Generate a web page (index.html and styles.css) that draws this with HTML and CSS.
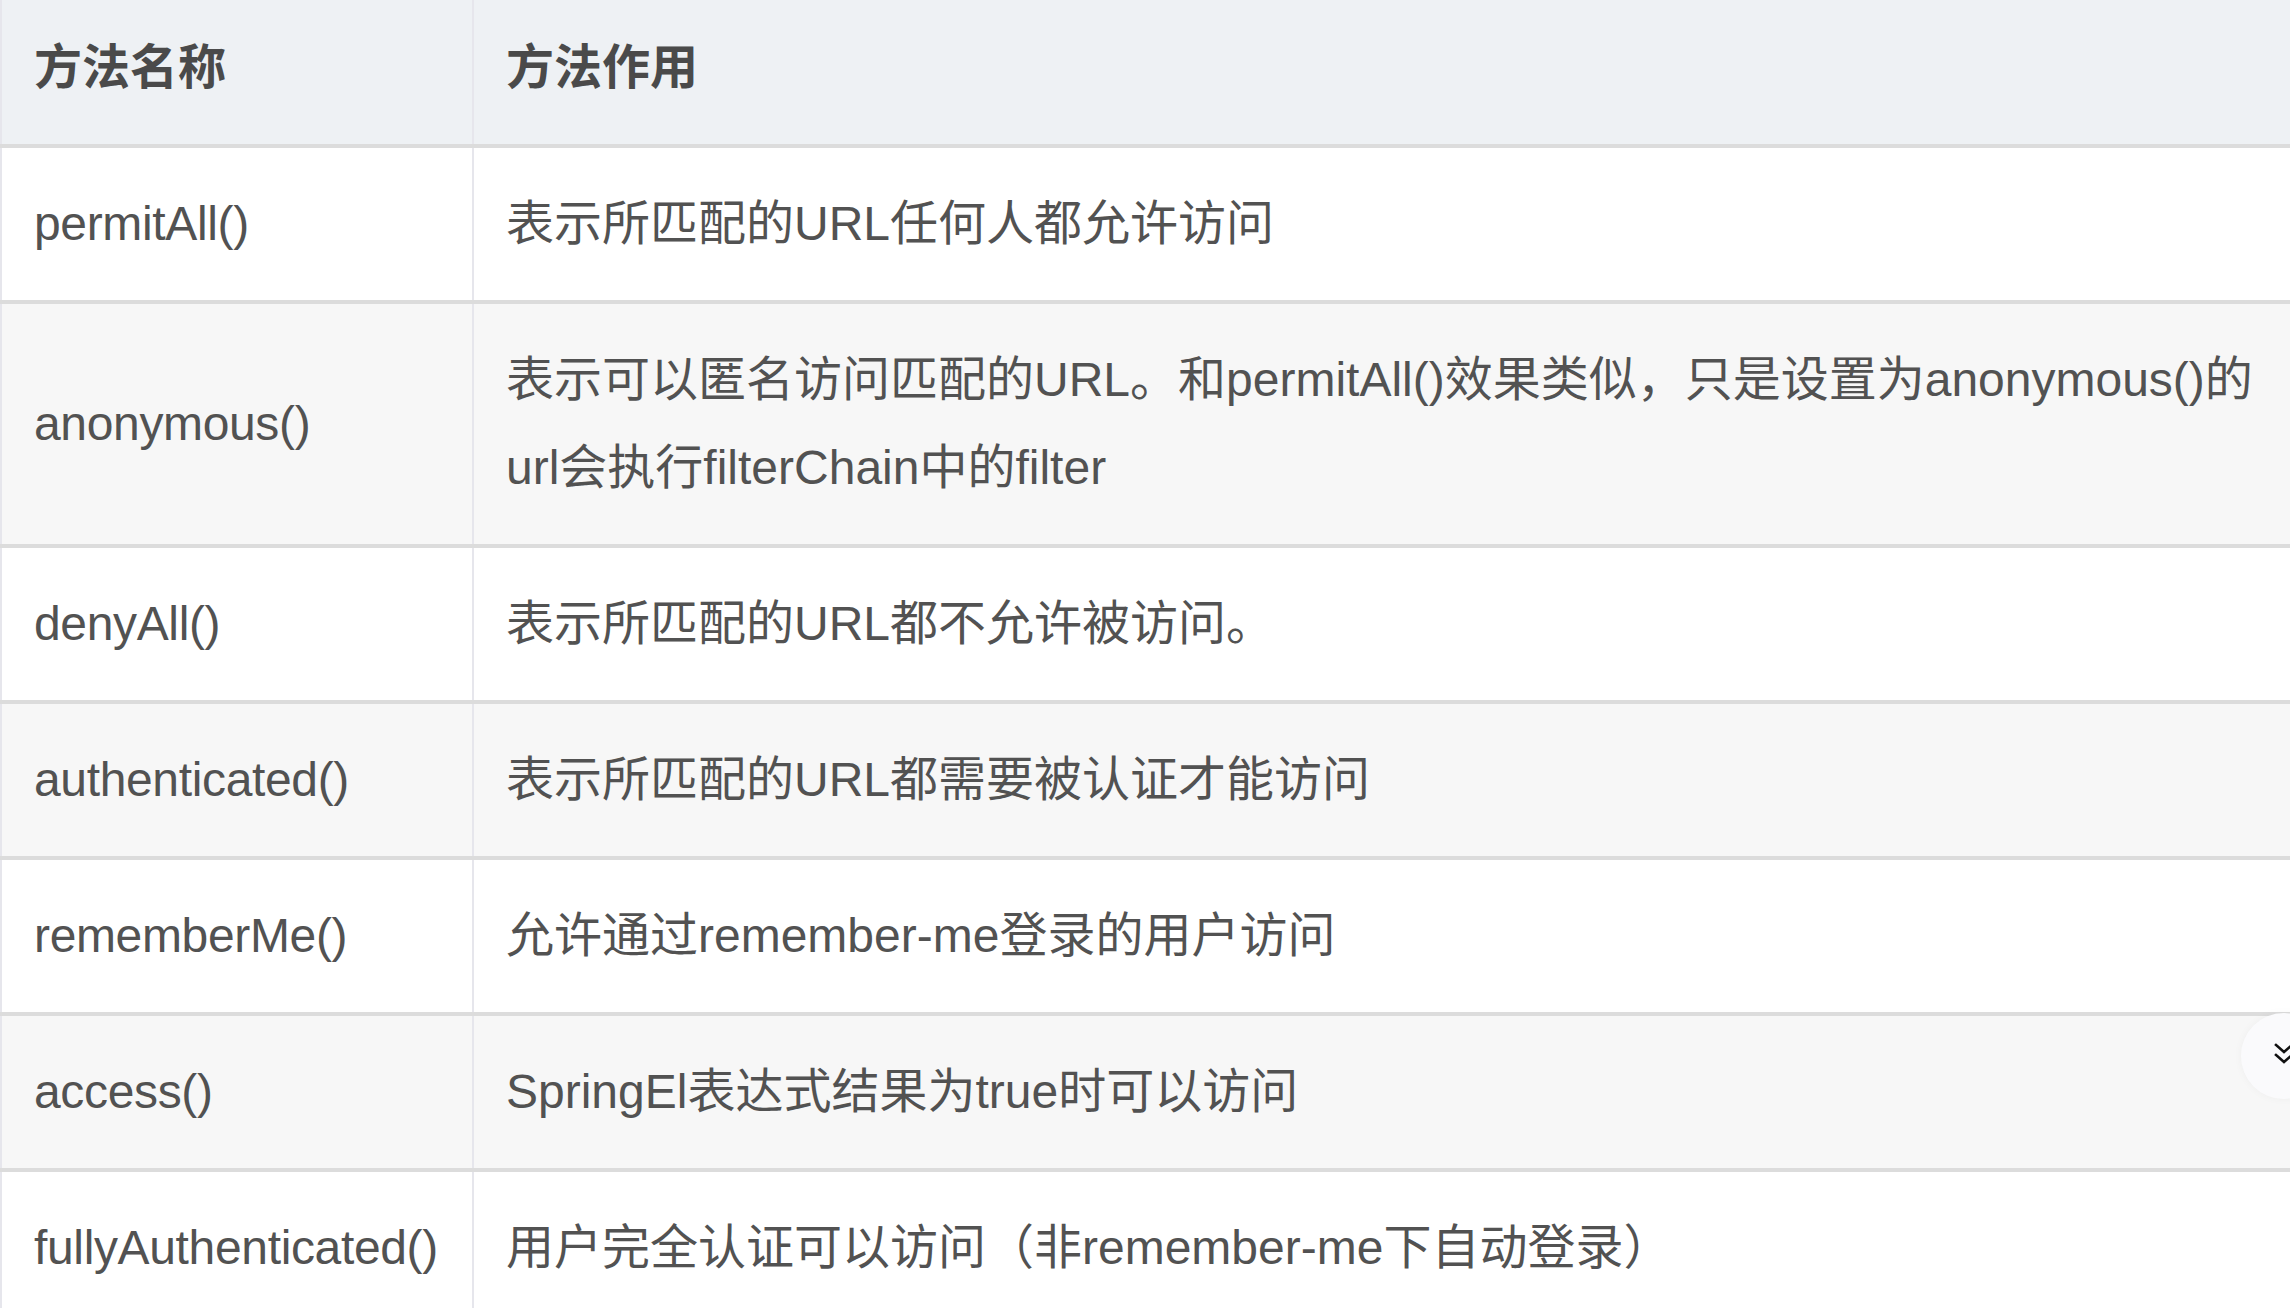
FILE: index.html
```html
<!DOCTYPE html>
<html lang="zh-CN">
<head>
<meta charset="utf-8">
<title>方法</title>
<link rel="stylesheet" href="styles.css">
</head>
<body>
<div class="page">
  <table class="methods">
    <colgroup>
      <col class="col-name">
      <col class="col-desc">
    </colgroup>
    <thead>
      <tr>
        <th>方法名称</th>
        <th>方法作用</th>
      </tr>
    </thead>
    <tbody>
      <tr>
        <td class="name">permitAll()</td>
        <td>表示所匹配的URL任何人都允许访问</td>
      </tr>
      <tr>
        <td class="name">anonymous()</td>
        <td>表示可以匿名访问匹配的URL。和permitAll()效果类似，只是设置为anonymous()的<br>url会执行filterChain中的filter</td>
      </tr>
      <tr>
        <td class="name">denyAll()</td>
        <td>表示所匹配的URL都不允许被访问。</td>
      </tr>
      <tr>
        <td class="name">authenticated()</td>
        <td>表示所匹配的URL都需要被认证才能访问</td>
      </tr>
      <tr>
        <td class="name">rememberMe()</td>
        <td>允许通过remember-me登录的用户访问</td>
      </tr>
      <tr>
        <td class="name">access()</td>
        <td>SpringEl表达式结果为true时可以访问</td>
      </tr>
      <tr>
        <td class="name">fullyAuthenticated()</td>
        <td>用户完全认证可以访问（非remember-me下自动登录）</td>
      </tr>
    </tbody>
  </table>
</div>
<button class="scroll-btn" type="button" aria-label="scroll down">
  <svg width="22" height="24" viewBox="0 0 22 24" fill="none" stroke="#111" stroke-width="2.6" stroke-linecap="square" stroke-linejoin="miter">
    <polyline points="3,3 11,10 19,3"/>
    <polyline points="3,13 11,20 19,13"/>
  </svg>
</button>
</body>
</html>
```
FILE: styles.css
```css
html, body {
  margin: 0;
  padding: 0;
  background: #ffffff;
  overflow: hidden;
}

.page {
  width: 2300px;
  margin-top: -8px;
}

.methods {
  width: 2300px;
  border-collapse: collapse;
  table-layout: fixed;
  font-family: "Liberation Sans", "Noto Sans CJK SC", sans-serif;
  font-size: 48px;
  line-height: 88px;
  color: #525252;
}

.col-name {
  width: 472px;
}

.methods th,
.methods td {
  padding: 32px 32px;
  text-align: left;
  vertical-align: middle;
  border-left: 2px solid #e6e6ec;
  border-bottom: 4px solid #dcdcdc;
  white-space: nowrap;
}

.methods td.name {
  letter-spacing: -0.35px;
}

.methods th {
  background: #eef1f4;
  font-weight: bold;
  color: #4a4a4a;
}

.methods tbody tr:nth-child(odd) {
  background: #ffffff;
}

.methods tbody tr:nth-child(even) {
  background: #f7f7f7;
}

.scroll-btn {
  position: fixed;
  left: 2241px;
  top: 1013px;
  width: 86px;
  height: 86px;
  border-radius: 50%;
  border: none;
  padding: 0;
  background: #fafafc;
  box-shadow: 0 0 8px rgba(0, 0, 0, 0.04);
  display: flex;
  align-items: center;
  justify-content: center;
}

.scroll-btn svg {
  display: block;
  margin-top: -4px;
}
```
